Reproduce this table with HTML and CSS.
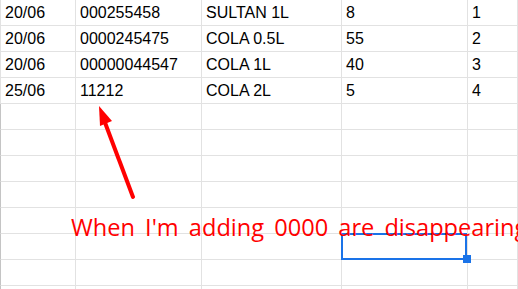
FILE: index.html
```html
<!DOCTYPE html>
<html>
<head>
<meta charset="utf-8">
<link rel="stylesheet" href="styles.css">
</head>
<body>
<div class="sheet">
  <div class="grid">
    <div class="cell a">20/06</div><div class="cell">000255458</div><div class="cell">SULTAN 1L</div><div class="cell">8</div><div class="cell">1</div>
    <div class="cell a">20/06</div><div class="cell">0000245475</div><div class="cell">COLA 0.5L</div><div class="cell">55</div><div class="cell">2</div>
    <div class="cell a">20/06</div><div class="cell">00000044547</div><div class="cell">COLA 1L</div><div class="cell">40</div><div class="cell">3</div>
    <div class="cell a">25/06</div><div class="cell">11212</div><div class="cell">COLA 2L</div><div class="cell">5</div><div class="cell">4</div>
    <div class="cell a dark"></div><div class="cell"></div><div class="cell"></div><div class="cell"></div><div class="cell"></div>
    <div class="cell a dark"></div><div class="cell"></div><div class="cell"></div><div class="cell"></div><div class="cell"></div>
    <div class="cell a dark"></div><div class="cell"></div><div class="cell"></div><div class="cell"></div><div class="cell"></div>
    <div class="cell a dark"></div><div class="cell"></div><div class="cell"></div><div class="cell"></div><div class="cell"></div>
    <div class="cell a dark"></div><div class="cell"></div><div class="cell"></div><div class="cell"></div><div class="cell"></div>
    <div class="cell a dark"></div><div class="cell"></div><div class="cell"></div><div class="cell selected"><span class="handle"></span></div><div class="cell"></div>
    <div class="cell a dark"></div><div class="cell"></div><div class="cell"></div><div class="cell"></div><div class="cell"></div>
    <div class="cell a dark"></div><div class="cell"></div><div class="cell"></div><div class="cell"></div><div class="cell"></div>
  </div>
  <svg class="arrow" width="518" height="289" viewBox="0 0 518 289">
    <line x1="133" y1="197" x2="104" y2="120" stroke="#ff0000" stroke-width="4" stroke-linecap="round"/>
    <polygon points="99,106 100,126 112,121" fill="#ff0000"/>
  </svg>
  <div class="note">When I'm adding 0000 are disappearing</div>
</div>
</body>
</html>
```

FILE: styles.css
```css
html, body {
  margin: 0;
  padding: 0;
  background: #ffffff;
}
.sheet {
  position: relative;
  width: 518px;
  height: 289px;
  overflow: hidden;
}
.grid {
  display: grid;
  grid-template-columns: 76px 126px 140px 126px 1fr;
  grid-auto-rows: 26px;
  font-family: "Liberation Sans", Arial, sans-serif;
  font-size: 16px;
  line-height: 18px;
  color: #000000;
}
.cell {
  box-sizing: border-box;
  border-right: 1px solid #e2e2e2;
  border-bottom: 1px solid #e2e2e2;
  padding: 4px 0 0 4px;
  white-space: nowrap;
  position: relative;
}
.cell.a {
  border-left: 1px solid #e2e2e2;
}
.cell.a.dark {
  border-left-color: #c4c4c4;
}
.selected::before {
  content: "";
  position: absolute;
  left: -1px;
  top: -1px;
  right: 0;
  bottom: -1px;
  border: 2px solid #1a73e8;
}
.handle {
  position: absolute;
  width: 8px;
  height: 8px;
  right: -4px;
  bottom: -4px;
  background: #1a73e8;
  z-index: 1;
}
.arrow {
  position: absolute;
  left: 0;
  top: 0;
}
.note {
  position: absolute;
  left: 71px;
  top: 210px;
  font-family: "Open Sans", sans-serif;
  font-size: 23.6px;
  line-height: 34px;
  word-spacing: 4px;
  color: #ff0000;
  white-space: nowrap;
  z-index: 2;
}
```
